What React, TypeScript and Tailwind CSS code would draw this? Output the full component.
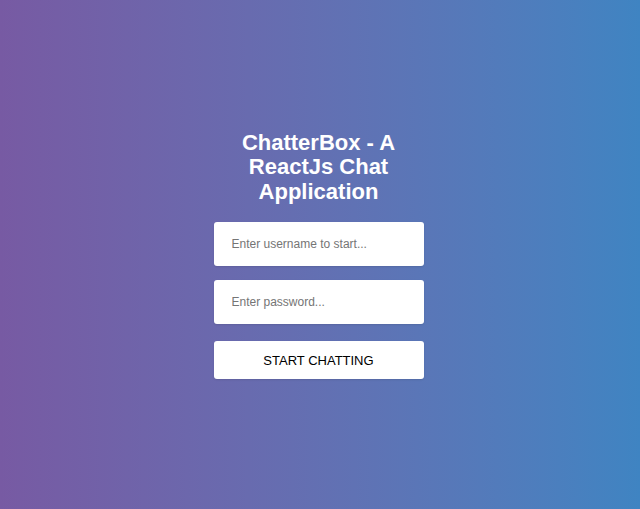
import React, { useState } from 'react';

const App: React.FC = () => {
  const [username, setUsername] = useState('');
  const [password, setPassword] = useState('');

  return (
    <div
      className="flex h-[509px] w-full items-center justify-center bg-gradient-to-r from-[#775aa3] to-[#3f84c2]"
      style={{ fontFamily: '"Liberation Sans", Arial, sans-serif' }}
    >
      <form
        className="mr-[3px] mt-[1px] flex w-[210px] flex-col items-stretch"
        onSubmit={(e) => e.preventDefault()}
      >
        <h1 className="text-center text-[22px] font-bold leading-[24.5px] text-white">
          ChatterBox - A ReactJs Chat Application
        </h1>
        <input
          type="text"
          value={username}
          onChange={(e) => setUsername(e.target.value)}
          placeholder="Enter username to start..."
          className="mt-[18px] h-[44px] rounded-[3px] bg-white px-[18px] text-[12px] text-gray-800 shadow-[0_1px_2px_rgba(0,0,0,0.1)] placeholder:text-[#757575] focus:outline-none"
        />
        <input
          type="password"
          value={password}
          onChange={(e) => setPassword(e.target.value)}
          placeholder="Enter password..."
          className="mt-[14px] h-[44px] rounded-[3px] bg-white px-[18px] text-[12px] text-gray-800 shadow-[0_1px_2px_rgba(0,0,0,0.1)] placeholder:text-[#757575] focus:outline-none"
        />
        <button
          type="submit"
          className="mt-[17px] h-[38px] rounded-[3px] bg-white text-[13px] text-black shadow-[0_1px_2px_rgba(0,0,0,0.1)]"
        >
          START CHATTING
        </button>
      </form>
    </div>
  );
};

export default App;
